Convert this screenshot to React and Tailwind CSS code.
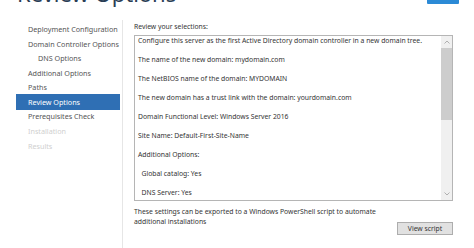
import React from 'react';

const navItems = [
	{ label: 'Deployment Configuration' },
	{ label: 'Domain Controller Options' },
	{ label: 'DNS Options', sub: true },
	{ label: 'Additional Options' },
	{ label: 'Paths' },
	{ label: 'Review Options', active: true },
	{ label: 'Prerequisites Check' },
	{ label: 'Installation', disabled: true },
	{ label: 'Results', disabled: true },
];

const lines = [
	'Configure this server as the first Active Directory domain controller in a new domain tree.',
	'The name of the new domain: mydomain.com',
	'The NetBIOS name of the domain: MYDOMAIN',
	'The new domain has a trust link with the domain: yourdomain.com',
	'Domain Functional Level: Windows Server 2016',
	'Site Name: Default-First-Site-Name',
	'Additional Options:',
	'  Global catalog: Yes',
	'  DNS Server: Yes',
];

export default function App() {
	return (
		<div className="relative w-[474px] h-[248px] overflow-hidden bg-white text-[#333] font-['Noto_Sans',sans-serif]">
			{/* 上方被裁掉的標題 */}
			<div className="h-[20px] overflow-hidden pl-[17px]">
				<div className="-mt-[18.5px] text-[22px] leading-[22px] text-[#2a3d55]">Review Options</div>
			</div>
			<div className="absolute top-0 left-[427px] w-[32px] h-[4px] bg-[#2b8ad6] rounded-b-[1px]" />

			<div className="flex h-[228px]">
				{/* 左側步驟清單 */}
				<div className="w-[123px] shrink-0 border-r border-[#e6e6e6] pt-[2px] pl-[16px] pr-[2px]">
					{navItems.map((item) => (
						<div
							key={item.label}
							className={
								item.active
									? 'h-[16px] -my-[0.75px] leading-[16px] bg-[#2f6fb4] text-white text-[7.2px] whitespace-nowrap ' + (item.sub ? 'pl-[22px]' : 'pl-[12px]')
									: 'h-[14.6px] leading-[14.6px] text-[7.2px] whitespace-nowrap ' + (item.disabled ? 'text-[#cfcfcf] ' : 'text-[#555] ') + (item.sub ? 'pl-[22px]' : 'pl-[12px]')
							}
						>
							{item.label}
						</div>
					))}
				</div>

				{/* 右側內容 */}
				<div className="flex-1 min-w-0 pl-[11px] pr-[21px]">
					<div className="h-[15px] pt-[2px] text-[6.8px] leading-[10px]">Review your selections:</div>
					<div className="flex h-[166px] border border-[#b5b5b5]">
						<div className="flex-1 min-w-0 overflow-hidden pl-[3px] flex flex-col gap-[9px] text-[6.8px] leading-[10px] whitespace-pre">
							{lines.map((l) => (
								<div key={l}>{l}</div>
							))}
						</div>
						<div className="w-[11px] shrink-0 flex flex-col bg-[#f0f0f0]">
							<div className="h-[12px] flex items-center justify-center text-[#a0a0a0]">
								<svg width="6" height="4" viewBox="0 0 6 4"><path d="M0.5 3.5 L3 1 L5.5 3.5" fill="none" stroke="currentColor" strokeWidth="0.8" /></svg>
							</div>
							<div className="h-[72px] bg-[#cdcdcd]" />
							<div className="flex-1" />
							<div className="h-[12px] flex items-center justify-center text-[#a0a0a0]">
								<svg width="6" height="4" viewBox="0 0 6 4"><path d="M0.5 0.5 L3 3 L5.5 0.5" fill="none" stroke="currentColor" strokeWidth="0.8" /></svg>
							</div>
						</div>
					</div>
					<div className="mt-[6px] text-[6.8px] leading-[10px]">
						<div>These settings can be exported to a Windows PowerShell script to automate</div>
						<div>additional installations</div>
					</div>
					<div className="flex justify-end -mt-[5px]">
						<div className="w-[56px] h-[13px] border border-[#adadad] bg-[#e1e1e1] text-[6.8px] leading-[11px] text-center">View script</div>
					</div>
				</div>
			</div>
		</div>
	);
}
